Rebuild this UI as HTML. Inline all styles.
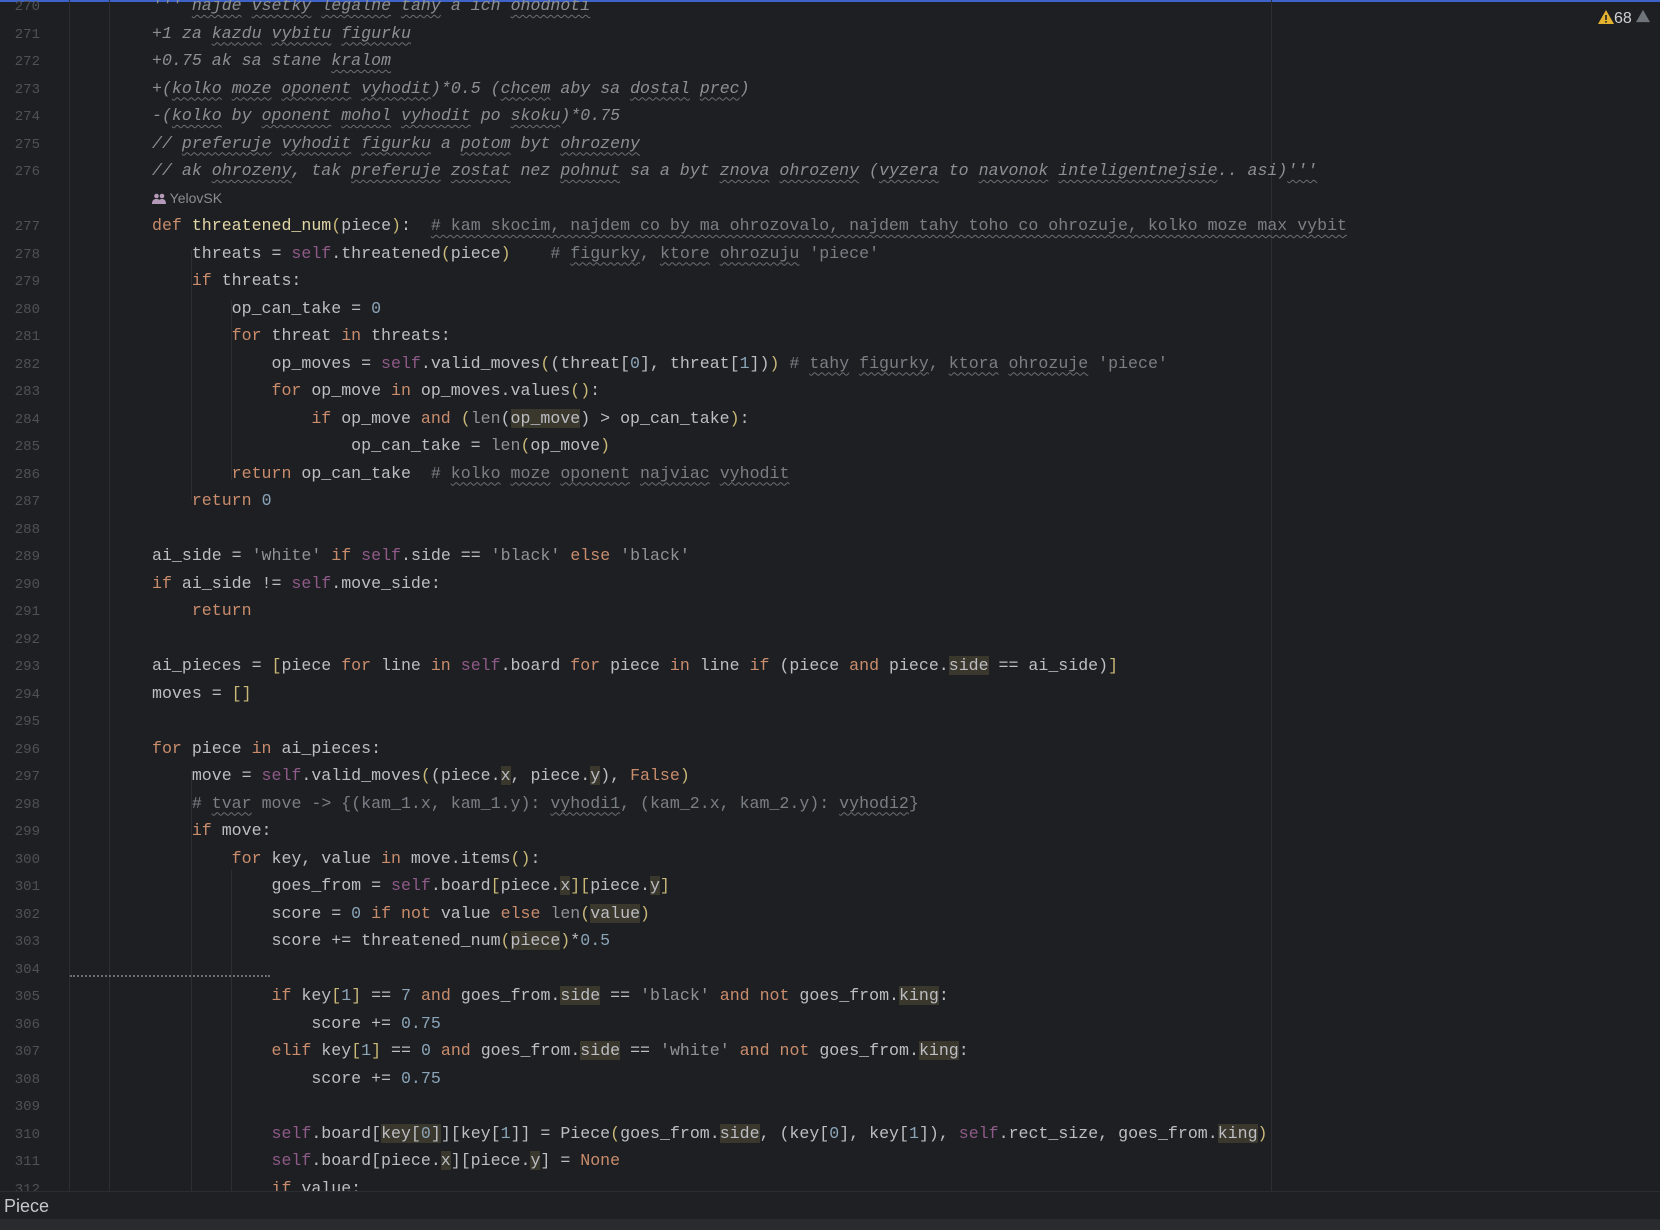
<!DOCTYPE html>
<html><head><meta charset="utf-8"><style>
html,body{margin:0;padding:0;background:#1e1f22;width:1660px;height:1230px;overflow:hidden}
#ed{position:absolute;left:0;top:0;width:1660px;height:1191px;overflow:hidden;background:#1e1f22}
.top{position:absolute;left:0;top:0;width:1660px;height:2px;background:#3d63c9}
.vl{position:absolute;top:0;height:1191px;width:1px;background:#2c2e32}
#gut{position:absolute;left:0;top:-6px;width:40px;text-align:right;font:14px/27.5px "Liberation Mono",monospace;color:#4e5157;white-space:pre}
#code{position:absolute;left:152px;top:-8px;font:16.6px/27.5px "Liberation Mono",monospace;color:#bcbec4;white-space:pre}
.k{color:#c98c6c}.s{color:#8e5a88}.t{color:#8f9297}.n{color:#8aa4b8}.f{color:#e2d7a6}
.c{color:#7a7e85}.d{color:#8c8f94;font-style:italic}
.w{text-decoration:underline wavy #6a6e74;text-underline-offset:4px;text-decoration-thickness:1px}
.h{background:#3a372d}
.y{color:#c9b878}
.au{font:14px "Liberation Sans",sans-serif;color:#8a8d92}
#sb{position:absolute;left:0;top:1191px;width:1660px;height:28px;background:#1f2023;border-top:1px solid #2b2d30;font:18px/28px "Liberation Sans",sans-serif;color:#c5c7cc;padding-left:4px;box-sizing:border-box}
#sb2{position:absolute;left:0;top:1219px;width:1660px;height:11px;background:#2a2b2e}
.warn{position:absolute;left:1598px;top:9px;font:16px "Liberation Sans",sans-serif;color:#ced0d6}
</style></head><body>
<div id="ed">
<div class="top"></div>
<div class="vl" style="left:69px"></div>
<div class="vl" style="left:109px"></div>
<div class="vl" style="left:191px;top:250px;height:250px"></div>
<div class="vl" style="left:231px;top:300px;height:180px"></div>
<div class="vl" style="left:191px;top:770px;height:421px"></div>
<div class="vl" style="left:231px;top:870px;height:321px"></div>
<div class="vl" style="left:1271px"></div>
<div style="position:absolute;left:70px;top:975px;width:200px;border-top:2px dotted #6a6e74"></div>
<div class="warn"><svg width="16" height="14" viewBox="0 0 16 14" style="vertical-align:-1px"><path d="M8 0L16 14H0Z" fill="#e3b22f"/><rect x="7.2" y="5" width="1.6" height="5" fill="#1e1f22"/><rect x="7.2" y="11" width="1.6" height="1.6" fill="#1e1f22"/></svg>68 <svg width="14" height="14" viewBox="0 0 16 14"><path d="M8 0L16 14H0Z" fill="#6f737a"/></svg></div>
<div id="gut">270
271
272
273
274
275
276

277
278
279
280
281
282
283
284
285
286
287
288
289
290
291
292
293
294
295
296
297
298
299
300
301
302
303
304
305
306
307
308
309
310
311
312</div>
<div id="code"><span class="d">''' <span class="w">najde</span> <span class="w">vsetky</span> <span class="w">legalne</span> <span class="w">tahy</span> a ich <span class="w">ohodnoti</span></span>
<span class="d">+1 za <span class="w">kazdu</span> <span class="w">vybitu</span> <span class="w">figurku</span></span>
<span class="d">+0.75 ak sa stane <span class="w">kralom</span></span>
<span class="d">+(<span class="w">kolko</span> <span class="w">moze</span> <span class="w">oponent</span> <span class="w">vyhodit</span>)*0.5 (<span class="w">chcem</span> aby sa <span class="w">dostal</span> <span class="w">prec</span>)</span>
<span class="d">-(<span class="w">kolko</span> by <span class="w">oponent</span> <span class="w">mohol</span> <span class="w">vyhodit</span> po <span class="w">skoku</span>)*0.75</span>
<span class="d">// <span class="w">preferuje</span> <span class="w">vyhodit</span> <span class="w">figurku</span> a <span class="w">potom</span> byt <span class="w">ohrozeny</span></span>
<span class="d">// ak <span class="w">ohrozeny</span>, tak <span class="w">preferuje</span> <span class="w">zostat</span> nez <span class="w">pohnut</span> sa a byt <span class="w">znova</span> <span class="w">ohrozeny</span> (<span class="w">vyzera</span> to <span class="w">navonok</span> <span class="w">inteligentnejsie</span>.. asi)<span class="w">'''</span></span>
<span class="au"><svg width="14" height="11" viewBox="0 0 14 11" style="vertical-align:-1px"><circle cx="4.5" cy="3" r="2.3" fill="#b49ab8"/><circle cx="10" cy="3" r="2.3" fill="#b49ab8"/><path d="M0 11C0 7 2 6 4.5 6S9 7 9 11ZM6 11C6 7 8 6 10 6S14 7 14 11Z" fill="#b49ab8"/></svg> YelovSK</span>
<span class="k">def</span> <span class="f">threatened_num</span><span class="y">(</span>piece<span class="y">)</span>:  <span class="c w"># kam skocim, najdem co by ma ohrozovalo, najdem tahy toho co ohrozuje, kolko moze max vybit</span>
    threats = <span class="s">self</span>.threatened<span class="y">(</span>piece<span class="y">)</span>    <span class="c"># <span class="w">figurky</span>, <span class="w">ktore</span> <span class="w">ohrozuju</span> 'piece'</span>
    <span class="k">if</span> threats:
        op_can_take = <span class="n">0</span>
        <span class="k">for</span> threat <span class="k">in</span> threats:
            op_moves = <span class="s">self</span>.valid_moves<span class="y">(</span>(threat[<span class="n">0</span>], threat[<span class="n">1</span>])<span class="y">)</span> <span class="c"># <span class="w">tahy</span> <span class="w">figurky</span>, <span class="w">ktora</span> <span class="w">ohrozuje</span> 'piece'</span>
            <span class="k">for</span> op_move <span class="k">in</span> op_moves.values<span class="y">()</span>:
                <span class="k">if</span> op_move <span class="k">and</span> <span class="y">(</span><span class="t">len</span>(<span class="h">op_move</span>) &gt; op_can_take<span class="y">)</span>:
                    op_can_take = <span class="t">len</span><span class="y">(</span>op_move<span class="y">)</span>
        <span class="k">return</span> op_can_take  <span class="c"># <span class="w">kolko</span> <span class="w">moze</span> <span class="w">oponent</span> <span class="w">najviac</span> <span class="w">vyhodit</span></span>
    <span class="k">return</span> <span class="n">0</span>

ai_side = <span class="t">'white'</span> <span class="k">if</span> <span class="s">self</span>.side == <span class="t">'black'</span> <span class="k">else</span> <span class="t">'black'</span>
<span class="k">if</span> ai_side != <span class="s">self</span>.move_side:
    <span class="k">return</span>

ai_pieces = <span class="y">[</span>piece <span class="k">for</span> line <span class="k">in</span> <span class="s">self</span>.board <span class="k">for</span> piece <span class="k">in</span> line <span class="k">if</span> (piece <span class="k">and</span> piece.<span class="h">side</span> == ai_side)<span class="y">]</span>
moves = <span class="y">[]</span>

<span class="k">for</span> piece <span class="k">in</span> ai_pieces:
    move = <span class="s">self</span>.valid_moves<span class="y">(</span>(piece.<span class="h">x</span>, piece.<span class="h">y</span>), <span class="k">False</span><span class="y">)</span>
    <span class="c"># <span class="w">tvar</span> move -&gt; {(kam_1.x, kam_1.y): <span class="w">vyhodi1</span>, (kam_2.x, kam_2.y): <span class="w">vyhodi2</span>}</span>
    <span class="k">if</span> move:
        <span class="k">for</span> key, value <span class="k">in</span> move.items<span class="y">()</span>:
            goes_from = <span class="s">self</span>.board<span class="y">[</span>piece.<span class="h">x</span><span class="y">][</span>piece.<span class="h">y</span><span class="y">]</span>
            score = <span class="n">0</span> <span class="k">if not</span> value <span class="k">else</span> <span class="t">len</span><span class="y">(</span><span class="h">value</span><span class="y">)</span>
            score += threatened_num<span class="y">(</span><span class="h">piece</span><span class="y">)</span>*<span class="n">0.5</span>

            <span class="k">if</span> key<span class="y">[</span><span class="n">1</span><span class="y">]</span> == <span class="n">7</span> <span class="k">and</span> goes_from.<span class="h">side</span> == <span class="t">'black'</span> <span class="k">and not</span> goes_from.<span class="h">king</span>:
                score += <span class="n">0.75</span>
            <span class="k">elif</span> key<span class="y">[</span><span class="n">1</span><span class="y">]</span> == <span class="n">0</span> <span class="k">and</span> goes_from.<span class="h">side</span> == <span class="t">'white'</span> <span class="k">and not</span> goes_from.<span class="h">king</span>:
                score += <span class="n">0.75</span>

            <span class="s">self</span>.board[<span class="h">key[<span class="n">0</span>]</span>][key[<span class="n">1</span>]] = Piece<span class="y">(</span>goes_from.<span class="h">side</span>, (key[<span class="n">0</span>], key[<span class="n">1</span>]), <span class="s">self</span>.rect_size, goes_from.<span class="h">king</span><span class="y">)</span>
            <span class="s">self</span>.board[piece.<span class="h">x</span>][piece.<span class="h">y</span>] = <span class="k">None</span>
            <span class="k">if</span> value:</div>
</div>
<div id="sb">Piece</div>
<div id="sb2"></div>
</body></html>
